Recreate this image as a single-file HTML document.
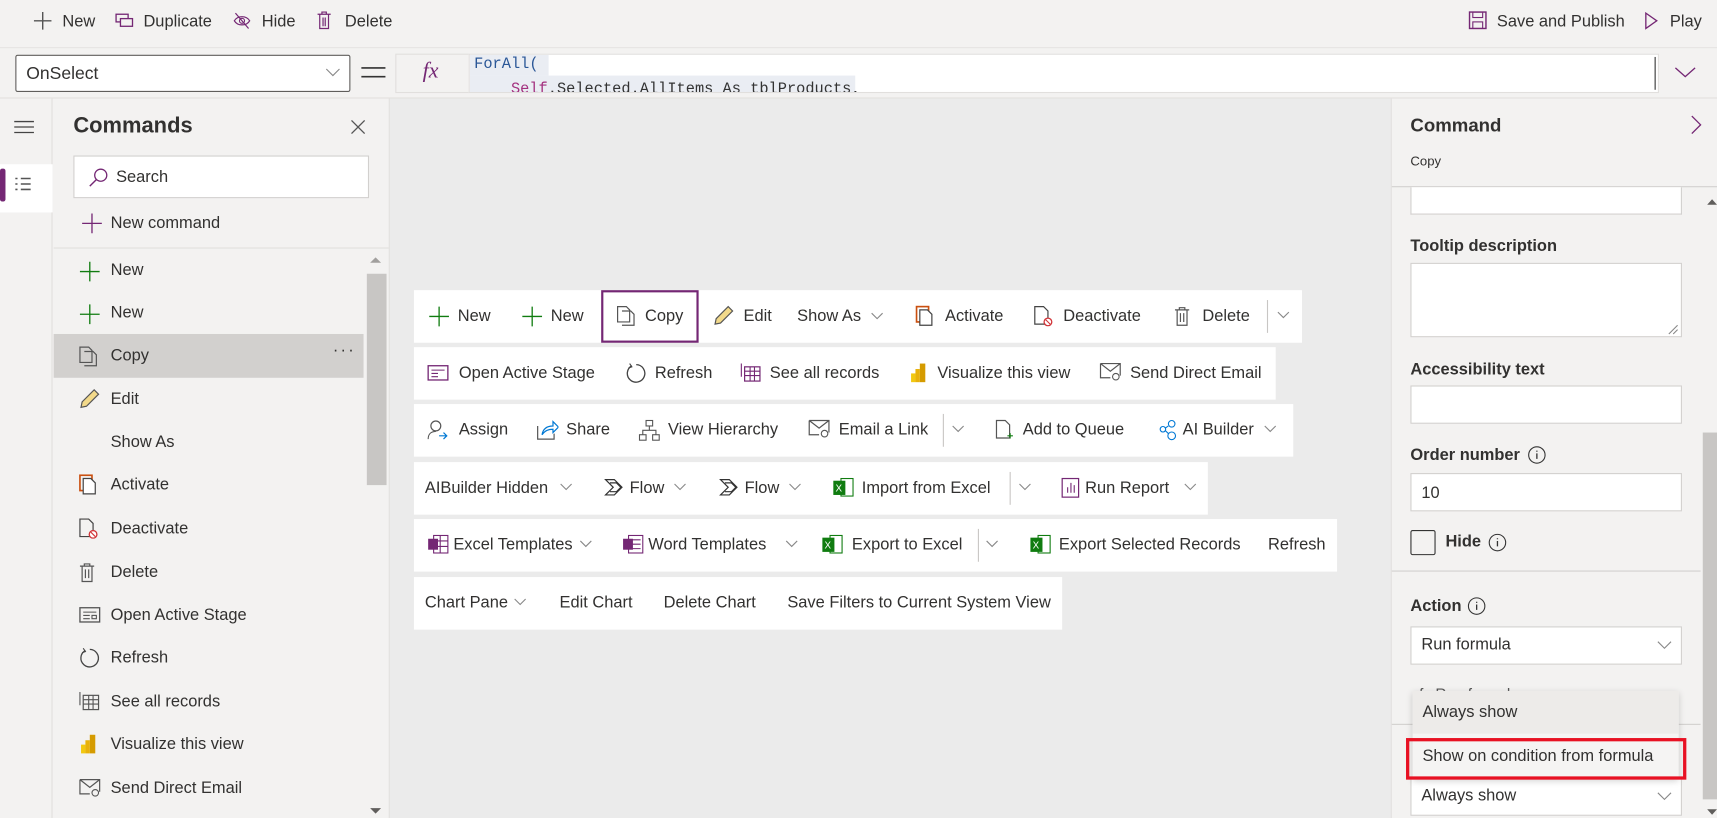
<!DOCTYPE html>
<html><head><meta charset="utf-8">
<style>
*{box-sizing:border-box;margin:0;padding:0}
html,body{width:1717px;height:818px;overflow:hidden;background:#f3f2f1}
body{font-family:"Liberation Sans",sans-serif;color:#323130}
#w{position:absolute;left:0;top:0;width:1568px;height:747px;transform:scale(1.09503);transform-origin:0 0;background:#f3f2f1;overflow:hidden}
.a{position:absolute}
.t{position:absolute;font-size:15px;white-space:nowrap;line-height:20px}
.bar{position:absolute;left:378px;height:48px;background:#fff}
.bar .t{top:14px}
.bar svg{position:absolute;top:14px}
.lbl{position:absolute;left:1288px;font-size:15px;font-weight:bold;color:#323130}
.inp{position:absolute;left:1288px;width:248px;background:#fff;border:1px solid #d2d0ce}
.li{position:absolute;left:101px;font-size:15px}
.li2{position:absolute;left:72px}
</style></head><body><div id="w">

<div class="a" style="left:0;top:0;width:1568px;height:44px;background:#f3f2f1;border-bottom:1px solid #e6e4e2"></div>
<svg class="a" style="left:30px;top:10px" width="18" height="18"><path d="M9 1v16M1 9h16" stroke="#555" stroke-width="1.3"/></svg>
<span class="t" style="left:57px;top:10px">New</span>
<svg class="a" style="left:105px;top:12px" width="18" height="14"><rect x="1" y="1" width="11" height="7" fill="none" stroke="#742774" stroke-width="1.2"/><rect x="5" y="5" width="11" height="7" fill="#f3f2f1" stroke="#742774" stroke-width="1.2"/></svg>
<span class="t" style="left:131px;top:10px">Duplicate</span>
<svg class="a" style="left:212px;top:10px" width="18" height="18"><path d="M2 9c3-5 11-5 14 0c-3 5-11 5-14 0z" fill="none" stroke="#742774" stroke-width="1.1"/><circle cx="9" cy="9" r="2.3" fill="none" stroke="#742774"/><path d="M3 2l12 14" stroke="#742774" stroke-width="1.1"/></svg>
<span class="t" style="left:239px;top:10px">Hide</span>
<svg class="a" style="left:289px;top:9px" width="14" height="18"><path d="M1 4h12M5 4V2h4v2M3 4v13h8V4M6 7v8M8 7v8" fill="none" stroke="#742774" stroke-width="1.1"/></svg>
<span class="t" style="left:315px;top:10px">Delete</span>
<svg class="a" style="left:1341px;top:10px" width="17" height="17"><rect x="1" y="1" width="15" height="15" fill="none" stroke="#742774" stroke-width="1.3"/><rect x="4" y="1" width="9" height="5" fill="none" stroke="#742774"/><rect x="4" y="10" width="9" height="6" fill="none" stroke="#742774"/></svg>
<span class="t" style="left:1367px;top:10px">Save and Publish</span>
<svg class="a" style="left:1501px;top:10px" width="14" height="18"><path d="M2 2l10 7-10 7z" fill="none" stroke="#742774" stroke-width="1.2"/></svg>
<span class="t" style="left:1525px;top:10px">Play</span>

<div class="a" style="left:14px;top:50px;width:306px;height:34px;background:#fff;border:1px solid #605e5c;border-radius:2px"></div>
<span class="t" style="left:24px;top:58px;font-size:16px">OnSelect</span>
<svg class="a" style="left:297px;top:61px" width="14" height="10"><path d="M1 2l6 6 6-6" fill="none" stroke="#888" stroke-width="1"/></svg>
<svg class="a" style="left:329px;top:59px" width="24" height="14"><path d="M1 3h22M1 11h22" stroke="#333" stroke-width="1.5"/></svg>
<div class="a" style="left:361px;top:49px;width:68px;height:36px;background:#f3f2f1;border:1px solid #e1dfdd"></div>
<span class="t" style="left:386px;top:55px;font-family:'Liberation Serif',serif;font-style:italic;font-size:20px;color:#742774">fx</span>
<div class="a" style="left:428px;top:49px;width:1087px;height:36px;background:#fff;border:1px solid #e1dfdd;overflow:hidden">
 <div class="a" style="left:0;top:0;width:72px;height:19px;background:#eaedf3"></div>
 <div class="a" style="left:0;top:19px;width:352px;height:18px;background:#eaedf3"></div>
 <span class="a" style="left:4px;top:1px;font-family:'Liberation Mono',monospace;font-size:14px;color:#2b5797">ForAll(</span>
 <span class="a" style="left:4px;top:24px;font-family:'Liberation Mono',monospace;font-size:14px;color:#333;white-space:pre">    <span style="color:#a3317f">Self</span>.Selected.AllItems As tblProducts,</span>
</div>
<div class="a" style="left:1511px;top:52px;width:1px;height:30px;background:#333"></div>
<svg class="a" style="left:1529px;top:60px" width="20" height="12"><path d="M1 2l9 8 9-8" fill="none" stroke="#742774" stroke-width="1.2"/></svg>
<div class="a" style="left:0;top:89px;width:1568px;height:1px;background:#e1dfdd"></div>

<div class="a" style="left:0;top:90px;width:48px;height:657px;background:#f3f2f1;border-right:1px solid #e1dfdd"></div>
<svg class="a" style="left:12px;top:109px" width="20" height="14"><path d="M1 2h18M1 7h18M1 12h18" stroke="#444" stroke-width="1.2"/></svg>
<div class="a" style="left:0;top:150px;width:48px;height:44px;background:#fff"></div>
<div class="a" style="left:0;top:154px;width:5px;height:30px;background:#742774;border-radius:2px"></div>
<svg class="a" style="left:13px;top:161px" width="16" height="14"><path d="M1 2h2M1 7h2M1 12h2M6 2h9M6 7h9M6 12h9" stroke="#555" stroke-width="1.4"/></svg>

<div class="a" style="left:49px;top:90px;width:307px;height:657px;background:#f3f2f1;border-right:1px solid #e1dfdd"></div>
<span class="t" style="left:67px;top:105px;font-size:20px;font-weight:bold">Commands</span>
<svg class="a" style="left:319px;top:108px" width="16" height="16"><path d="M2 2l12 12M14 2L2 14" stroke="#555" stroke-width="1.2"/></svg>
<div class="a" style="left:67px;top:142px;width:270px;height:39px;background:#fff;border:1px solid #d2d0ce"></div>
<svg class="a" style="left:81px;top:153px" width="18" height="18"><circle cx="11" cy="7" r="5.5" fill="none" stroke="#742774" stroke-width="1.2"/><path d="M7 11l-6 6" stroke="#742774" stroke-width="1.3"/></svg>
<span class="t" style="left:106px;top:152px">Search</span>
<svg class="a" style="left:74px;top:194px" width="20" height="20"><path d="M10 1v18M1 10h18" stroke="#742774" stroke-width="1.2"/></svg>
<span class="t" style="left:101px;top:194px">New command</span>
<div class="a" style="left:49px;top:226px;width:306px;height:1px;background:#e1dfdd"></div>
<div class="a" style="left:49px;top:305px;width:283px;height:40px;background:#d2d0ce"></div>
<span class="t" style="left:304px;top:310px;letter-spacing:2px">···</span>
<div class="a" style="left:334px;top:230px;width:19px;height:517px;background:#f3f2f1"></div>
<svg class="a" style="left:338px;top:234px" width="10" height="7"><path d="M0 6l5-5 5 5z" fill="#a19f9d"/></svg>
<div class="a" style="left:335px;top:250px;width:18px;height:193px;background:#c8c6c4"></div>
<svg class="a" style="left:338px;top:737px" width="10" height="7"><path d="M0 1l5 5 5-5z" fill="#605e5c"/></svg>

<svg class="a li2" style="top:238px" width="20" height="20"><path d="M10 1v18M1 10h18" stroke="#107c10" stroke-width="1.2"/></svg><span class="t li" style="top:237px">New</span>
<svg class="a li2" style="top:277px" width="20" height="20"><path d="M10 1v18M1 10h18" stroke="#107c10" stroke-width="1.2"/></svg><span class="t li" style="top:276px">New</span>
<svg class="a li2" style="top:316px" width="18" height="19"><path d="M1 1h8l3 3v11H1z M5 5h8l3 3v10H5" fill="none" stroke="#555" stroke-width="1.1"/></svg><span class="t li" style="top:315px">Copy</span>
<svg class="a li2" style="top:355px" width="19" height="19"><path d="M2 17l1-5L14 1l4 4L7 16z" fill="#f2d98a" stroke="#555" stroke-width="1.1"/></svg><span class="t li" style="top:355px">Edit</span>
<span class="t li" style="top:394px">Show As</span>
<svg class="a li2" style="top:433px" width="18" height="19"><rect x="1" y="1" width="11" height="14" fill="none" stroke="#ca5010" stroke-width="1.5"/><path d="M4 4h7l4 4v10H4z" fill="#fff" stroke="#444" stroke-width="1.1"/></svg><span class="t li" style="top:433px">Activate</span>
<svg class="a li2" style="top:473px" width="18" height="19"><path d="M1 1h8l4 4v12H1z" fill="none" stroke="#444" stroke-width="1.1"/><circle cx="13" cy="15" r="3.5" fill="#fff" stroke="#d13438" stroke-width="1.2"/><path d="M11 13l4 4" stroke="#d13438"/></svg><span class="t li" style="top:473px">Deactivate</span>
<svg class="a li2" style="top:513px" width="16" height="19"><path d="M1 4h13M5 4V2h5v2M3 4v14h9V4M6 7v8M9 7v8" fill="none" stroke="#555" stroke-width="1.1"/></svg><span class="t li" style="top:513px">Delete</span>
<svg class="a li2" style="top:554px" width="20" height="16"><rect x="1" y="1" width="18" height="13" fill="none" stroke="#555" stroke-width="1.2"/><path d="M4 5h12M4 8h6M4 11h6" stroke="#555"/><rect x="12" y="8" width="4" height="3" fill="none" stroke="#555"/></svg><span class="t li" style="top:552px">Open Active Stage</span>
<svg class="a li2" style="top:591px" width="20" height="20"><path d="M6 3A8 8 0 1 0 10 2" fill="none" stroke="#444" stroke-width="1.2"/><path d="M4 1l2 3-3 1" fill="none" stroke="#444"/></svg><span class="t li" style="top:591px">Refresh</span>
<svg class="a li2" style="top:631px" width="20" height="19"><rect x="4" y="4" width="14" height="13" fill="none" stroke="#555" stroke-width="1.1"/><path d="M4 8h14M4 12h14M9 4v13M13 4v13M1 1v12" stroke="#555"/></svg><span class="t li" style="top:631px">See all records</span>
<svg class="a li2" style="top:670px" width="18" height="19"><rect x="2" y="10" width="4" height="8" fill="#f2c811"/><rect x="6" y="6" width="4" height="12" fill="#e8b10a"/><rect x="10" y="1" width="5" height="17" fill="#d59b00"/></svg><span class="t li" style="top:670px">Visualize this view</span>
<svg class="a li2" style="top:711px" width="20" height="17"><path d="M1 1h18v11M1 1v13h9M1 1l9 7 9-7" fill="none" stroke="#555" stroke-width="1.1"/><circle cx="15" cy="13" r="3" fill="none" stroke="#555"/></svg><span class="t li" style="top:710px">Send Direct Email</span>

<div class="a" style="left:356px;top:90px;width:914px;height:657px;background:#ebebeb"></div>

<div class="bar" style="top:265px;width:811px">
 <svg style="left:13px" width="20" height="20"><path d="M10 1v18M1 10h18" stroke="#107c10" stroke-width="1.2"/></svg><span class="t" style="left:40px">New</span>
 <svg style="left:98px" width="20" height="20"><path d="M10 1v18M1 10h18" stroke="#107c10" stroke-width="1.2"/></svg><span class="t" style="left:125px">New</span>
 <div class="a" style="left:171px;top:0;width:89px;height:48px;border:2px solid #742774"></div>
 <svg style="left:185px" width="18" height="19"><path d="M1 1h8l3 3v11H1z M5 5h8l3 3v10H5" fill="none" stroke="#555" stroke-width="1.1"/></svg><span class="t" style="left:211px">Copy</span>
 <svg style="left:273px" width="19" height="19"><path d="M2 17l1-5L14 1l4 4L7 16z" fill="#f2d98a" stroke="#555" stroke-width="1.1"/></svg><span class="t" style="left:301px">Edit</span>
 <span class="t" style="left:350px">Show As</span><svg style="left:417px;top:20px" width="12" height="8"><path d="M1 1l5 5 5-5" fill="none" stroke="#888"/></svg>
 <svg style="left:458px" width="18" height="19"><rect x="1" y="1" width="11" height="14" fill="none" stroke="#ca5010" stroke-width="1.5"/><path d="M4 4h7l4 4v10H4z" fill="#fff" stroke="#444" stroke-width="1.1"/></svg><span class="t" style="left:485px">Activate</span>
 <svg style="left:566px" width="18" height="19"><path d="M1 1h8l4 4v12H1z" fill="none" stroke="#444" stroke-width="1.1"/><circle cx="13" cy="15" r="3.5" fill="#fff" stroke="#d13438" stroke-width="1.2"/><path d="M11 13l4 4" stroke="#d13438"/></svg><span class="t" style="left:593px">Deactivate</span>
 <svg style="left:694px" width="16" height="19"><path d="M1 4h13M5 4V2h5v2M3 4v14h9V4M6 7v8M9 7v8" fill="none" stroke="#555" stroke-width="1.1"/></svg><span class="t" style="left:720px">Delete</span>
 <div class="a" style="left:779px;top:9px;width:1px;height:30px;background:#c8c6c4"></div>
 <svg style="left:788px;top:19px" width="12" height="8"><path d="M1 1l5 5 5-5" fill="none" stroke="#888"/></svg>
</div>

<div class="bar" style="top:317px;width:787px">
 <svg style="left:12px;top:16px" width="20" height="16"><rect x="1" y="1" width="18" height="13" fill="none" stroke="#742774" stroke-width="1.2"/><path d="M4 5h12M4 8h6M4 11h6" stroke="#742774"/></svg><span class="t" style="left:41px">Open Active Stage</span>
 <svg style="left:193px" width="20" height="20"><path d="M6 3A8 8 0 1 0 10 2" fill="none" stroke="#444" stroke-width="1.2"/><path d="M4 1l2 3-3 1" fill="none" stroke="#444"/></svg><span class="t" style="left:220px">Refresh</span>
 <svg style="left:298px" width="20" height="19"><rect x="4" y="4" width="14" height="13" fill="none" stroke="#742774" stroke-width="1.1"/><path d="M4 8h14M4 12h14M9 4v13M13 4v13M1 1v12" stroke="#742774"/></svg><span class="t" style="left:325px">See all records</span>
 <svg style="left:452px" width="18" height="19"><rect x="2" y="10" width="4" height="8" fill="#f2c811"/><rect x="6" y="6" width="4" height="12" fill="#e8b10a"/><rect x="10" y="1" width="5" height="17" fill="#d59b00"/></svg><span class="t" style="left:478px">Visualize this view</span>
 <svg style="left:626px" width="20" height="17"><path d="M1 1h18v11M1 1v13h9M1 1l9 7 9-7" fill="none" stroke="#555" stroke-width="1.1"/><circle cx="15" cy="13" r="3" fill="none" stroke="#555"/></svg><span class="t" style="left:654px">Send Direct Email</span>
</div>

<div class="bar" style="top:369px;width:803px">
 <svg style="left:12px" width="20" height="20"><circle cx="8" cy="6" r="4.5" fill="none" stroke="#555" stroke-width="1.1"/><path d="M1 18c0-5 3-7 7-7" fill="none" stroke="#555"/><path d="M11 15h7M15 12l3 3-3 3" fill="none" stroke="#0078d4" stroke-width="1.1"/></svg><span class="t" style="left:41px">Assign</span>
 <svg style="left:112px" width="20" height="19"><path d="M1 6v12h15v-5" fill="none" stroke="#555" stroke-width="1.1"/><path d="M5 14c1-6 5-8 10-8V2l5 5-5 5V9c-4 0-7 1-10 5z" fill="none" stroke="#0078d4" stroke-width="1.1"/></svg><span class="t" style="left:139px">Share</span>
 <svg style="left:205px" width="20" height="20"><rect x="7" y="1" width="6" height="5" fill="none" stroke="#555"/><rect x="1" y="14" width="6" height="5" fill="none" stroke="#555"/><rect x="13" y="14" width="6" height="5" fill="none" stroke="#555"/><path d="M10 6v4M4 14v-4h12v4" fill="none" stroke="#555"/></svg><span class="t" style="left:232px">View Hierarchy</span>
 <svg style="left:360px" width="20" height="17"><path d="M1 1h18v11M1 1v13h9M1 1l9 7 9-7" fill="none" stroke="#555" stroke-width="1.1"/><circle cx="15" cy="13" r="3" fill="none" stroke="#555"/></svg><span class="t" style="left:388px">Email a Link</span>
 <div class="a" style="left:483px;top:9px;width:1px;height:30px;background:#c8c6c4"></div>
 <svg style="left:491px;top:19px" width="12" height="8"><path d="M1 1l5 5 5-5" fill="none" stroke="#888"/></svg>
 <svg style="left:530px" width="18" height="19"><path d="M2 1h8l4 4v12H2z" fill="none" stroke="#555" stroke-width="1.1"/><path d="M12 15h5M14.5 12.5v5" stroke="#107c10"/></svg><span class="t" style="left:556px">Add to Queue</span>
 <svg style="left:680px" width="18" height="20"><circle cx="4" cy="9" r="2.5" fill="none" stroke="#0078d4"/><circle cx="12" cy="4" r="3" fill="none" stroke="#0078d4"/><circle cx="12" cy="15" r="3.5" fill="none" stroke="#0078d4"/><path d="M6 8l3-2M6 10l3 3" stroke="#0078d4"/></svg><span class="t" style="left:702px">AI Builder</span>
 <svg style="left:776px;top:19px" width="12" height="8"><path d="M1 1l5 5 5-5" fill="none" stroke="#888"/></svg>
</div>

<div class="bar" style="top:422px;width:725px">
 <span class="t" style="left:10px">AIBuilder Hidden</span><svg style="left:133px;top:19px" width="12" height="8"><path d="M1 1l5 5 5-5" fill="none" stroke="#888"/></svg>
 <svg style="left:173px;top:15px" width="20" height="16"><path d="M2 1h8l7 7-7 7H2l7-7z M6 4h6l4 4-4 4H6" fill="none" stroke="#333" stroke-width="1.1"/></svg><span class="t" style="left:197px">Flow</span><svg style="left:237px;top:19px" width="12" height="8"><path d="M1 1l5 5 5-5" fill="none" stroke="#888"/></svg>
 <svg style="left:278px;top:15px" width="20" height="16"><path d="M2 1h8l7 7-7 7H2l7-7z M6 4h6l4 4-4 4H6" fill="none" stroke="#333" stroke-width="1.1"/></svg><span class="t" style="left:302px">Flow</span><svg style="left:342px;top:19px" width="12" height="8"><path d="M1 1l5 5 5-5" fill="none" stroke="#888"/></svg>
 <svg style="left:382px" width="20" height="20"><rect x="8" y="1" width="11" height="16" fill="none" stroke="#107c10"/><rect x="1" y="3" width="11" height="13" fill="#107c10"/><text x="3" y="13" font-size="9" fill="#fff" font-family="Liberation Sans">X</text></svg><span class="t" style="left:409px">Import from Excel</span>
 <div class="a" style="left:544px;top:9px;width:1px;height:30px;background:#c8c6c4"></div>
 <svg style="left:552px;top:19px" width="12" height="8"><path d="M1 1l5 5 5-5" fill="none" stroke="#888"/></svg>
 <svg style="left:590px" width="18" height="19"><rect x="2" y="1" width="15" height="17" fill="none" stroke="#742774" stroke-width="1.1"/><path d="M7 14V9M10 14V5M13 14V7" stroke="#742774"/></svg><span class="t" style="left:613px">Run Report</span>
 <svg style="left:703px;top:19px" width="12" height="8"><path d="M1 1l5 5 5-5" fill="none" stroke="#888"/></svg>
</div>

<div class="bar" style="top:474px;width:843px">
 <svg style="left:12px" width="20" height="19"><rect x="6" y="1" width="13" height="16" fill="none" stroke="#742774"/><path d="M6 6h13M6 11h13M12 1v16" stroke="#742774"/><rect x="1" y="4" width="9" height="10" fill="#742774"/></svg><span class="t" style="left:36px">Excel Templates</span><svg style="left:151px;top:19px" width="12" height="8"><path d="M1 1l5 5 5-5" fill="none" stroke="#888"/></svg>
 <svg style="left:190px" width="20" height="19"><rect x="6" y="1" width="13" height="16" fill="none" stroke="#742774"/><path d="M9 5h8M9 9h8M9 13h8" stroke="#742774"/><rect x="1" y="4" width="9" height="10" fill="#742774"/></svg><span class="t" style="left:214px">Word Templates</span><svg style="left:339px;top:19px" width="12" height="8"><path d="M1 1l5 5 5-5" fill="none" stroke="#888"/></svg>
 <svg style="left:372px" width="20" height="20"><rect x="8" y="1" width="11" height="16" fill="none" stroke="#107c10"/><rect x="1" y="3" width="11" height="13" fill="#107c10"/><text x="3" y="13" font-size="9" fill="#fff" font-family="Liberation Sans">X</text></svg><span class="t" style="left:400px">Export to Excel</span>
 <div class="a" style="left:515px;top:9px;width:1px;height:30px;background:#c8c6c4"></div>
 <svg style="left:522px;top:19px" width="12" height="8"><path d="M1 1l5 5 5-5" fill="none" stroke="#888"/></svg>
 <svg style="left:562px" width="20" height="20"><rect x="8" y="1" width="11" height="16" fill="none" stroke="#107c10"/><rect x="1" y="3" width="11" height="13" fill="#107c10"/><text x="3" y="13" font-size="9" fill="#fff" font-family="Liberation Sans">X</text></svg><span class="t" style="left:589px">Export Selected Records</span>
 <span class="t" style="left:780px">Refresh</span>
</div>

<div class="bar" style="top:527px;width:592px">
 <span class="t" style="left:10px">Chart Pane</span><svg style="left:91px;top:19px" width="12" height="8"><path d="M1 1l5 5 5-5" fill="none" stroke="#888"/></svg>
 <span class="t" style="left:133px">Edit Chart</span>
 <span class="t" style="left:228px">Delete Chart</span>
 <span class="t" style="left:341px">Save Filters to Current System View</span>
</div>

<div class="a" style="left:1270px;top:90px;width:298px;height:657px;background:#f3f2f1;border-left:1px solid #e1dfdd"></div>
<span class="t" style="left:1288px;top:105px;font-size:17px;font-weight:bold">Command</span>
<span class="t" style="left:1288px;top:137px;font-size:12px">Copy</span>
<svg class="a" style="left:1543px;top:105px" width="12" height="18"><path d="M2 1l8 8-8 8" fill="none" stroke="#742774" stroke-width="1.2"/></svg>
<div class="a" style="left:1271px;top:170px;width:297px;height:1px;background:#d2d0ce"></div>
<div class="inp" style="top:171px;height:25px;border-top:none"></div>
<svg class="a" style="left:1559px;top:181px" width="9" height="7"><path d="M0 6l4.5-5 4.5 5z" fill="#605e5c"/></svg>
<div class="a" style="left:1555px;top:395px;width:13px;height:335px;background:#c8c6c4"></div>
<svg class="a" style="left:1559px;top:738px" width="9" height="7"><path d="M0 1l4.5 5 4.5-5z" fill="#605e5c"/></svg>
<span class="lbl" style="top:216px">Tooltip description</span>
<div class="inp" style="top:240px;height:68px"></div>
<svg class="a" style="left:1521px;top:294px" width="12" height="12"><path d="M11 3L3 11M11 7L7 11" stroke="#888"/></svg>
<span class="lbl" style="top:329px">Accessibility text</span>
<div class="inp" style="top:352px;height:35px"></div>
<span class="lbl" style="top:407px">Order number</span>
<svg class="a" style="left:1395px;top:407px" width="17" height="17"><circle cx="8.5" cy="8.5" r="7.5" fill="none" stroke="#333"/><path d="M8.5 7v5M8.5 4.5v1" stroke="#333" stroke-width="1.2"/></svg>
<div class="inp" style="top:432px;height:35px"></div>
<span class="t" style="left:1298px;top:441px">10</span>
<div class="a" style="left:1288px;top:484px;width:23px;height:23px;border:1px solid #333;border-radius:2px;background:#f3f2f1"></div>
<span class="lbl" style="left:1320px;top:486px">Hide</span>
<svg class="a" style="left:1359px;top:487px" width="17" height="17"><circle cx="8.5" cy="8.5" r="7.5" fill="none" stroke="#333"/><path d="M8.5 7v5M8.5 4.5v1" stroke="#333" stroke-width="1.2"/></svg>
<div class="a" style="left:1271px;top:521px;width:282px;height:1px;background:#d2d0ce"></div>
<span class="lbl" style="top:545px">Action</span>
<svg class="a" style="left:1340px;top:545px" width="17" height="17"><circle cx="8.5" cy="8.5" r="7.5" fill="none" stroke="#333"/><path d="M8.5 7v5M8.5 4.5v1" stroke="#333" stroke-width="1.2"/></svg>
<div class="inp" style="top:572px;height:35px"></div>
<span class="t" style="left:1298px;top:579px">Run formula</span>
<svg class="a" style="left:1513px;top:585px" width="14" height="8"><path d="M1 1l6 6 6-6" fill="none" stroke="#888"/></svg>
<span class="t" style="left:1296px;top:624px;font-size:14px;color:#555;clip-path:inset(0 0 12px 0)">fx Run formula</span>
<div class="a" style="left:1271px;top:661px;width:282px;height:1px;background:#d2d0ce"></div>
<div class="inp" style="top:710px;height:35px"></div>
<span class="t" style="left:1298px;top:717px">Always show</span>
<svg class="a" style="left:1513px;top:723px" width="14" height="8"><path d="M1 1l6 6 6-6" fill="none" stroke="#888"/></svg>
<div class="a" style="left:1290px;top:631px;width:243px;height:80px;background:#f5f4f3;box-shadow:0 2px 6px rgba(0,0,0,.18)"></div>
<div class="a" style="left:1290px;top:631px;width:243px;height:39px;background:#edebe9"></div>
<span class="t" style="left:1299px;top:641px">Always show</span>
<span class="t" style="left:1299px;top:681px">Show on condition from formula</span>
<div class="a" style="left:1284px;top:674px;width:256px;height:38px;border:3px solid #e81123"></div>

</div></body></html>
